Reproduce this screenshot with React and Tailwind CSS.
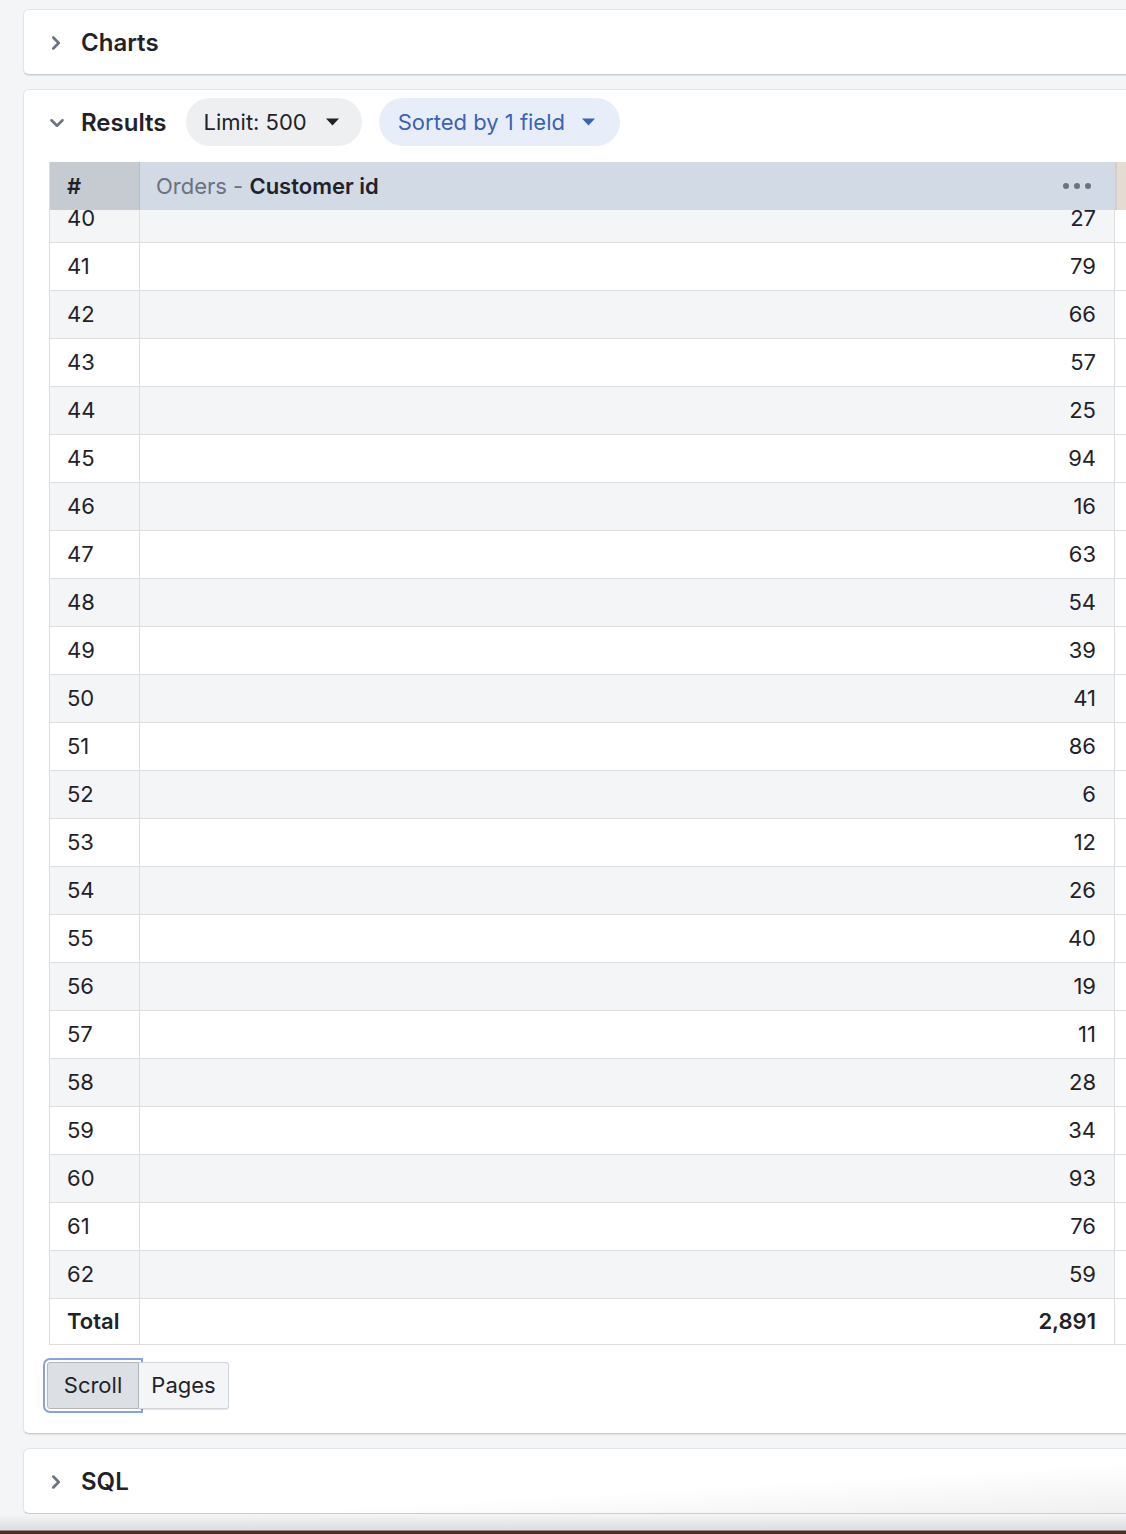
import React from "react";
import { ChevronRight, ChevronDown } from "lucide-react";

const rows = [
  [40, 27], [41, 79], [42, 66], [43, 57], [44, 25], [45, 94], [46, 16], [47, 63],
  [48, 54], [49, 39], [50, 41], [51, 86], [52, 6], [53, 12], [54, 26], [55, 40],
  [56, 19], [57, 11], [58, 28], [59, 34], [60, 93], [61, 76], [62, 59],
];

function Caret({ className }) {
  return (
    <svg width="15" height="8" viewBox="0 0 15 8" className={className}>
      <path d="M1 0.5h13L7.5 7.5z" fill="currentColor" />
    </svg>
  );
}

function CollapsedCard({ title, className = "bg-white" }) {
  return (
    <div className={`mr-[-20px] h-[66px] pt-[2px] border border-[#e2e4e7] border-b-[#c9ccd0] rounded-md shadow-[0_1px_1px_rgba(0,0,0,0.08)] flex items-center pl-[21px] ${className}`}>
      <ChevronRight size={22} strokeWidth={2.8} className="text-[#6b7280]" />
      <span className="ml-[14px] text-[24px] font-semibold text-[#1f2329]">{title}</span>
    </div>
  );
}

export default function App() {
  return (
    <div
      className="w-[1126px] h-[1534px] overflow-hidden bg-[#f4f5f7] flex flex-col"
      style={{ fontFamily: "Inter, 'Noto Sans', sans-serif" }}
    >
      <div className="flex-1 pl-[23px] pt-[9px] flex flex-col gap-[14px]">
        <CollapsedCard title="Charts" />

        <div className="mr-[-20px] bg-white border border-[#e2e4e7] border-b-[#c9ccd0] rounded-md shadow-[0_1px_1px_rgba(0,0,0,0.08)] pt-[8px] pb-[24px] pl-[25px]">
          <div className="flex items-center h-[48px]">
            <ChevronDown size={22} strokeWidth={2.8} className="text-[#6b7280] ml-[-3px] mt-[1px]" />
            <span className="ml-[13px] mt-[1px] text-[24px] font-semibold text-[#1f2329]">Results</span>
            <button className="ml-[19px] h-[48px] pl-[18px] pr-[22px] rounded-full bg-[#eeeff1] text-[22px] text-[#1f2329] flex items-center gap-[18px]">
              Limit: 500
              <Caret className="text-[#1f2329]" />
            </button>
            <button className="ml-[17px] h-[48px] pl-[19px] pr-[24px] rounded-full bg-[#e8eef9] text-[22px] text-[#3a62b6] flex items-center gap-[16px]">
              Sorted by 1 field
              <Caret className="text-[#3a62b6]" />
            </button>
          </div>

          <div className="mt-[16px] w-[1090px] border-l border-[#dcdee2]">
            <div className="flex h-[48px] text-[22px]">
              <div className="w-[90px] bg-[#c6cbd2] pl-[17px] flex items-center font-semibold text-[#1f2329] border-r border-[#b9bec6]">
                #
              </div>
              <div className="w-[975px] bg-[#d2dae6] pl-[16px] pr-[24px] flex items-center">
                <span className="text-[#6b7280]">Orders -&nbsp;</span>
                <span className="font-semibold text-[#1f2329]">Customer id</span>
                <span className="ml-auto flex gap-[5px]">
                  <span className="w-[6px] h-[6px] rounded-full bg-[#6b7280]" />
                  <span className="w-[6px] h-[6px] rounded-full bg-[#6b7280]" />
                  <span className="w-[6px] h-[6px] rounded-full bg-[#6b7280]" />
                </span>
              </div>
              <div className="flex-1 bg-[#e4dbd2] border-l-2 border-[#d6cdc4]" />
            </div>

            <div className="h-[1089px] overflow-hidden">
              <div className="mt-[-15px]">
                {rows.map(([n, v]) => (
                  <div
                    key={n}
                    className={`flex h-[48px] text-[22px] text-[#1f2329] border-b border-[#dcdee2] ${
                      n % 2 === 0 ? "bg-[#f4f5f7]" : "bg-white"
                    }`}
                  >
                    <div className="w-[90px] pl-[17px] flex items-center border-r border-[#dcdee2]">{n}</div>
                    <div className="w-[975px] pr-[18px] flex items-center justify-end border-r border-[#dcdee2]">{v}</div>
                    <div className="flex-1 bg-white" />
                  </div>
                ))}
              </div>
            </div>

            <div className="flex h-[46px] text-[22px] text-[#1f2329] border-b border-[#dcdee2] font-semibold">
              <div className="w-[90px] pl-[17px] flex items-center border-r border-[#dcdee2]">Total</div>
              <div className="w-[975px] pr-[18px] flex items-center justify-end border-r border-[#dcdee2]">2,891</div>
              <div className="flex-1" />
            </div>
          </div>

          <div className="mt-[17px] flex ml-[-2px] text-[22px] text-[#1f2329]">
            <button className="h-[47px] w-[92px] bg-[#dcdfe4] border border-[#b3b7bd] rounded-l-[3px] outline-2 outline-[#86a3e0] outline-offset-[2px]">
              Scroll
            </button>
            <button className="h-[47px] w-[90px] bg-[#f4f5f7] border border-l-0 border-[#d1d4d9] rounded-r-[3px] shadow-[0_1px_1px_rgba(0,0,0,0.1)]">
              Pages
            </button>
          </div>
        </div>

        <CollapsedCard title="SQL" className="bg-gradient-to-br from-white from-60% to-[#efefef]" />
      </div>
      <div className="h-[16px] bg-gradient-to-b from-[#f4f5f7] to-[#dcdde0]" />
      <div className="h-[1px] bg-[#8f8f8f]" />
      <div className="h-[3px] bg-[#5a2c14]" />
    </div>
  );
}
